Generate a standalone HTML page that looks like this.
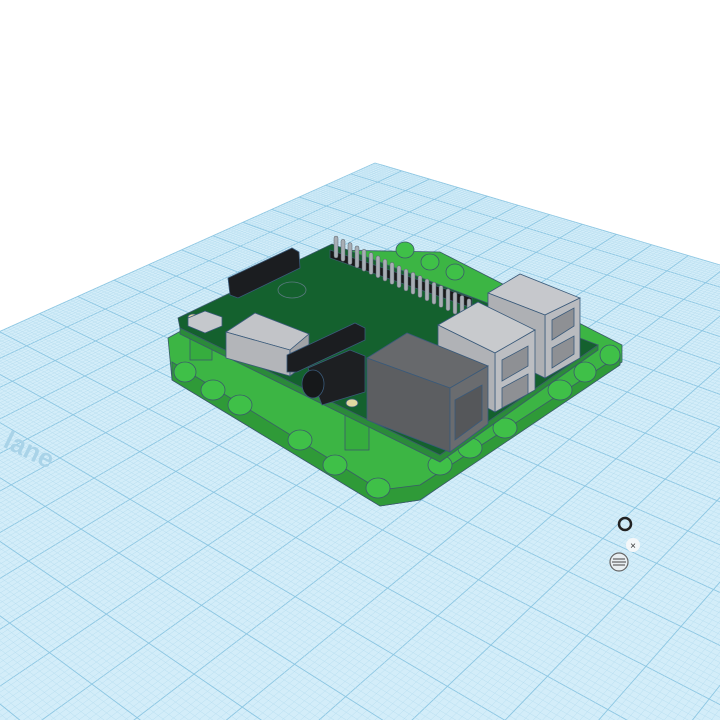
<!DOCTYPE html>
<html><head><meta charset="utf-8">
<style>html,body{margin:0;padding:0;background:#fff;width:720px;height:720px;overflow:hidden}svg{display:block}</style>
</head><body>
<svg id="s" width="720" height="720" viewBox="0 0 720 720" xmlns="http://www.w3.org/2000/svg">
<polygon id="plane" points="375,163 1150,392 560,1500 -420,520" fill="#d3edf9"/>
<g id="grid"></g>
<text x="0" y="455" transform="rotate(26 20 455)" font-family="Liberation Sans, sans-serif" font-weight="bold" font-size="26" fill="#a9d3e8">lane</text>
<g stroke="#3a5a6a" stroke-width="0.8">
<polygon points="168,338 330,250 440,252 622,345 622,362 420,500 380,506 172,380" fill="#3cb544"/>
<polygon points="172,362 380,490 420,485 620,355 620,365 420,500 380,506 172,380" fill="#2f9a38"/>
<g fill="#3fc048">
<ellipse cx="185" cy="372" rx="11" ry="10"/><ellipse cx="213" cy="390" rx="12" ry="10"/><ellipse cx="240" cy="405" rx="12" ry="10"/>
<ellipse cx="300" cy="440" rx="12" ry="10"/><ellipse cx="335" cy="465" rx="12" ry="10"/><ellipse cx="378" cy="488" rx="12" ry="10"/>
<ellipse cx="440" cy="465" rx="12" ry="10"/><ellipse cx="470" cy="448" rx="12" ry="10"/><ellipse cx="505" cy="428" rx="12" ry="10"/>
<ellipse cx="560" cy="390" rx="12" ry="10"/><ellipse cx="585" cy="372" rx="11" ry="10"/><ellipse cx="610" cy="355" rx="10" ry="10"/>
<ellipse cx="405" cy="250" rx="9" ry="8"/><ellipse cx="430" cy="262" rx="9" ry="8"/><ellipse cx="455" cy="272" rx="9" ry="8"/>
</g>
<rect x="345" y="410" width="24" height="40" fill="#36ad3e"/>
<rect x="190" y="330" width="22" height="30" fill="#36ad3e"/>
<polygon points="178,318 332,244 598,345 440,455 180,328" fill="#14612e"/>
<polygon points="180,328 440,455 598,345 598,350 440,462 180,334" fill="#2b8a3a"/>
<polygon points="330,250 472,298 472,308 330,258" fill="#1a1a1a"/>
</g>
<g id="pins" fill="#a8aeb4" stroke="#55606a" stroke-width="0.5"></g>
<g stroke="#3a5a7a" stroke-width="0.8">
<polygon points="228,278 292,248 299,252 300,268 238,298 230,295" fill="#1b1d20"/>
<ellipse cx="292" cy="290" rx="14" ry="8" fill="none" stroke="#5a7a80"/>
<ellipse cx="193" cy="317" rx="5" ry="3" fill="#e0d8a0"/>
<ellipse cx="352" cy="403" rx="6" ry="4" fill="#e0d8a0"/>
<polygon points="188,318 205,311 222,317 222,326 205,333 188,326" fill="#c5c8cc"/>
<polygon points="226,332 255,313 309,334 290,350" fill="#c2c4c8"/>
<polygon points="226,332 290,350 290,376 226,358" fill="#b3b5b9"/>
<polygon points="290,350 309,334 309,362 290,376" fill="#a0a2a6"/>
<polygon points="287,355 355,323 365,328 365,340 297,372 287,372" fill="#1b1d20"/>
<polygon points="308,368 350,350 365,356 365,392 322,405" fill="#1d1f22"/>
<ellipse cx="313" cy="384" rx="11" ry="14" fill="#16181a"/>
<polygon points="488,293 520,274 580,298 545,315" fill="#c6c8cc"/>
<polygon points="545,315 580,298 580,358 545,378" fill="#b9bbbf"/>
<polygon points="488,293 545,315 545,378 488,350" fill="#aeb0b4"/>
<polygon points="552,320 574,308 574,326 552,340" fill="#8e9094"/>
<polygon points="552,348 574,336 574,354 552,368" fill="#8e9094"/>
<polygon points="438,325 478,302 535,330 495,353" fill="#c8cacd"/>
<polygon points="495,353 535,330 535,390 495,412" fill="#bcbec2"/>
<polygon points="438,325 495,353 495,412 438,382" fill="#b0b2b6"/>
<polygon points="502,360 528,346 528,366 502,381" fill="#8e9094"/>
<polygon points="502,388 528,374 528,394 502,408" fill="#8e9094"/>
<polygon points="367,358 407,333 488,366 450,388" fill="#67696c"/>
<polygon points="367,358 450,388 450,452 367,420" fill="#5c5e61"/>
<polygon points="450,388 488,366 488,424 450,452" fill="#6a6c6f"/>
<polygon points="455,400 482,385 482,420 455,440" fill="#55575a"/>
</g>
<circle cx="625" cy="524" r="6" fill="none" stroke="#222" stroke-width="2.5"/>
<circle cx="633" cy="545" r="7" fill="#f4f7f9"/>
<text x="633" y="549" text-anchor="middle" font-family="Liberation Sans, sans-serif" font-size="10" fill="#333">×</text>
<circle cx="619" cy="562" r="9" fill="#e8eef1" stroke="#666" stroke-width="1.2"/>
<path d="M613 559h12M612 562h14M613 565h12" stroke="#666" stroke-width="1.2"/>
</svg>
<script>
(function(){
var x0=375,y0=163,x1=1150,y1=392,x2=560,y2=1500,x3=-420,y3=520;
var dx1=x1-x2,dx2=x3-x2,dx3=x0-x1+x2-x3,dy1=y1-y2,dy2=y3-y2,dy3=y0-y1+y2-y3;
var den=dx1*dy2-dx2*dy1,g=(dx3*dy2-dx2*dy3)/den,h=(dx1*dy3-dx3*dy1)/den;
var a=x1-x0+g*x1,b=x3-x0+h*x3,c=x0,d=y1-y0+g*y1,e=y3-y0+h*y3,f=y0;
function m(u,v){var w=g*u+h*v+1;return [(a*u+b*v+c)/w,(d*u+e*v+f)/w];}
var N=200,out='';
for(var i=0;i<=N;i++){var t=i/N,maj=i%10==0;
var col=maj?'#8cc6e2':'#b8def0',sw=maj?0.9:0.5;
var p=m(t,0),q=m(t,1),r=m(0,t),s=m(1,t);
out+='<line x1="'+p[0]+'" y1="'+p[1]+'" x2="'+q[0]+'" y2="'+q[1]+'" stroke="'+col+'" stroke-width="'+sw+'"/>';
out+='<line x1="'+r[0]+'" y1="'+r[1]+'" x2="'+s[0]+'" y2="'+s[1]+'" stroke="'+col+'" stroke-width="'+sw+'"/>';}
document.getElementById('grid').innerHTML=out;
var pins='';
for(var k=0;k<20;k++){var px=334+k*7,py=236+k*3.3;pins+='<rect x="'+px+'" y="'+py+'" width="4" height="22" rx="2"/>';}
document.getElementById('pins').innerHTML=pins;
})();
</script>
</body></html>
